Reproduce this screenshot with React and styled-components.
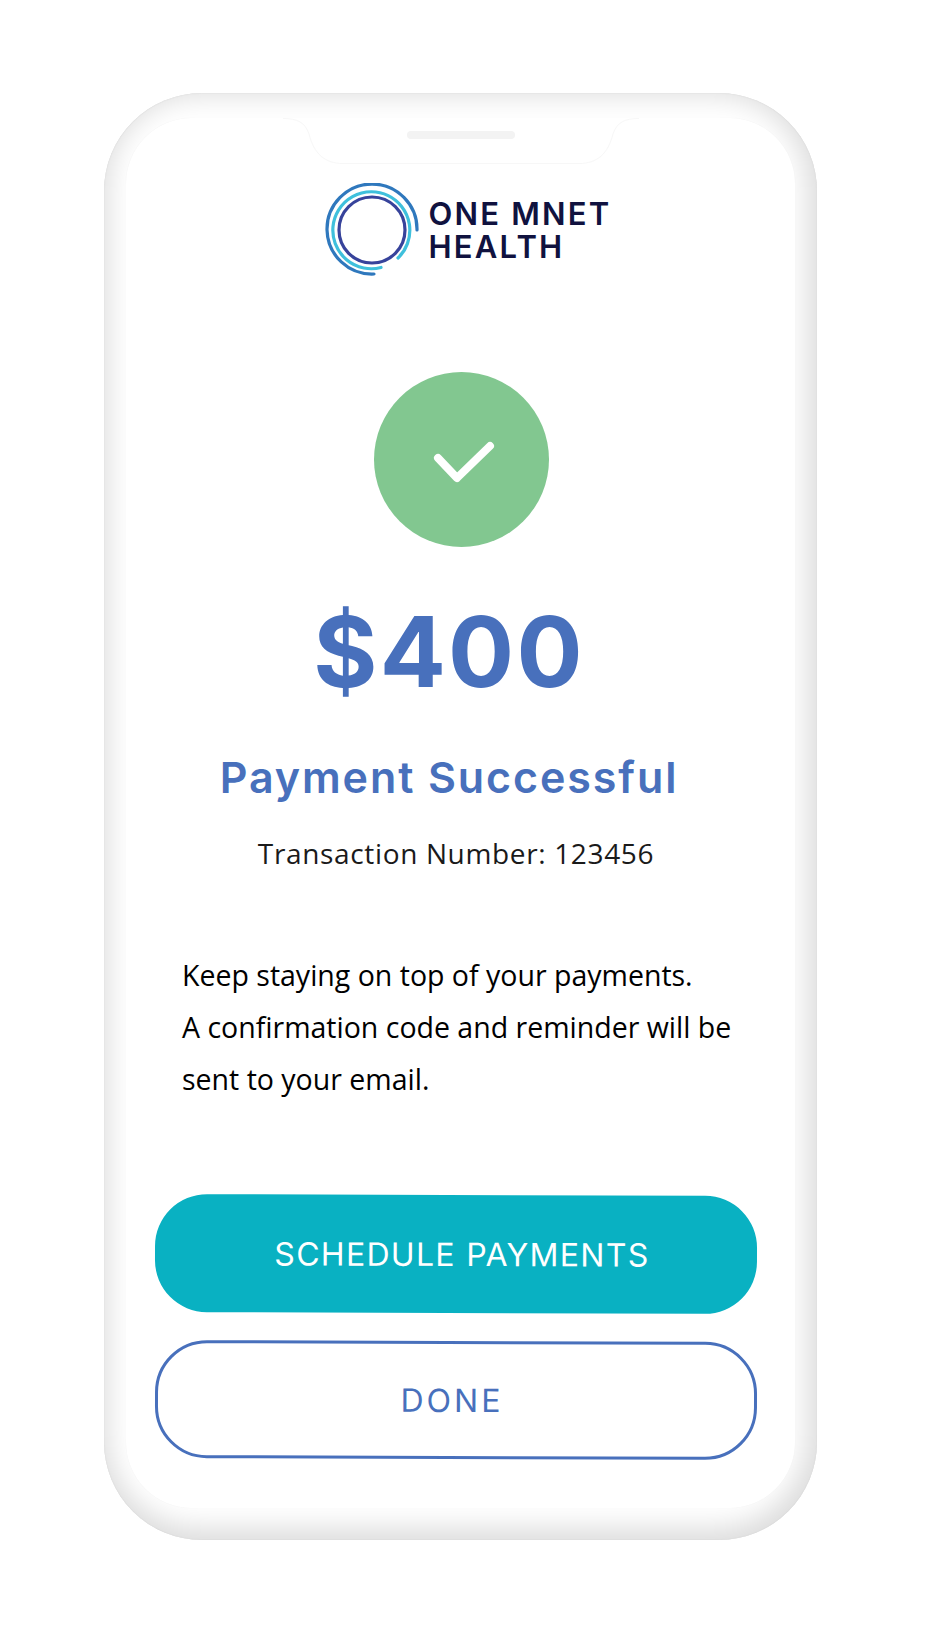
import React from 'react';
import styled, { createGlobalStyle } from 'styled-components';

const Global = createGlobalStyle`
  html, body { margin: 0; padding: 0; background: #fff; }
  body { font-family: "Open Sans", "Liberation Sans", sans-serif; }
`;

const Page = styled.div`
  width: 930px;
  height: 1650px;
  padding: 93px 0 0 104px;
  box-sizing: border-box;
`;

const Bezel = styled.div`
  width: 713px;
  height: 1447px;
  box-sizing: border-box;
  padding: 25px 22px 32px;
  border-radius: 98px;
  background: #fff;
  box-shadow: inset 0 0 1px #c4c4c4, inset -3px -5px 28px 7px #dcdcdc;
`;

const Screen = styled.div`
  height: 100%;
  border-radius: 66px;
  background: #fff;
  box-shadow: 0 0 1px #eee;
  display: flex;
  flex-direction: column;
  align-items: center;
`;

const NotchBox = styled.div`
  width: 356px;
  height: 46px;
  flex: none;
  position: relative;
  display: flex;
  justify-content: center;
`;

const Speaker = styled.div`
  position: absolute;
  top: 13px;
  left: 124px;
  width: 108px;
  height: 8px;
  border-radius: 4px;
  background: #f3f3f3;
`;

const Brand = styled.div`
  display: flex;
  align-items: center;
  gap: 10px;
  margin-top: 20px;
  height: 92px;
  margin-left: 15px;
`;

const BrandText = styled.div`
  font-family: Inter, "Liberation Sans", sans-serif;
  font-weight: 600;
  font-size: 31px;
  line-height: 33px;
  letter-spacing: 2.2px;
  color: #10123f;
`;

const Badge = styled.div`
  width: 175px;
  height: 175px;
  box-sizing: border-box;
  padding: 5px 0 0 5px;
  margin-top: 96px;
  margin-left: 2px;
  border-radius: 50%;
  background: #82c790;
  display: flex;
  align-items: center;
  justify-content: center;
`;

const Amount = styled.div`
  margin-top: 45px;
  padding-right: 23px;
  font-family: Inter, "Liberation Sans", sans-serif;
  font-weight: 700;
  font-size: 98px;
  line-height: 120px;
  letter-spacing: 2.2px;
  color: #4870bc;
`;

const Title = styled.div`
  margin-top: 40px;
  padding-right: 23px;
  font-family: Inter, "Liberation Sans", sans-serif;
  font-weight: 600;
  font-size: 43px;
  line-height: 50px;
  letter-spacing: 1.9px;
  color: #4870bc;
`;

const TxNumber = styled.div`
  margin-top: 33px;
  padding-right: 9px;
  font-size: 28px;
  line-height: 36px;
  letter-spacing: 0.65px;
  color: #1a1a1a;
`;

const Message = styled.p`
  align-self: flex-start;
  margin: 78px 0 0 56px;
  font-size: 28.5px;
  line-height: 52px;
  color: #000;
`;

const Button = styled.div`
  width: 602px;
  height: 118px;
  box-sizing: border-box;
  flex: none;
  margin-left: -9px;
  margin-top: ${p => p.$top}px;
  border-radius: 52px;
  display: flex;
  align-items: center;
  justify-content: center;
  padding: 0 ${p => p.$shiftLeft || 0}px 0 ${p => p.$shiftRight || 0}px;
  font-family: Inter, "Liberation Sans", sans-serif;
  font-size: 32px;
  font-weight: 400;
  letter-spacing: ${p => p.$track}px;
  color: ${p => (p.$outline ? '#4870bc' : '#fff')};
  background: ${p => (p.$outline ? '#fff' : '#09b1c2')};
  border: ${p => (p.$outline ? '3px solid #4870bc' : 'none')};
  transform: rotate(0.19deg);
`;

function Logo() {
  return (
    <svg width="94" height="94" viewBox="0 0 94 94" fill="none" strokeLinecap="round" strokeWidth="3.2">
      <path d="M92 47 A45 45 0 1 0 49 91" stroke="#2f78bd" />
      <path d="M73 75 A38.5 38.5 0 1 0 56 84.5" stroke="#3fc0dc" />
      <circle cx="47" cy="47" r="33" stroke="#37439b" />
    </svg>
  );
}

function Notch() {
  return (
    <NotchBox>
      <svg width="356" height="46" viewBox="0 0 356 46" fill="none" stroke="#f7f7f7">
        <path d="M0 .5 C14 .5 22 4 26 16 C31 36 42 45.5 60 45.5 H296 C314 45.5 325 36 330 16 C334 4 342 .5 356 .5" />
      </svg>
      <Speaker />
    </NotchBox>
  );
}

export default function App() {
  return (
    <Page>
      <Global />
      <Bezel>
        <Screen>
          <Notch />
          <Brand>
            <Logo />
            <BrandText>ONE MNET<br />HEALTH</BrandText>
          </Brand>
          <Badge>
            <svg width="64" height="44" viewBox="0 0 64 44" fill="none" stroke="#fff" strokeWidth="8" strokeLinecap="round" strokeLinejoin="round">
              <path d="M6 18 L25 38 L58 6" />
            </svg>
          </Badge>
          <Amount>$400</Amount>
          <Title>Payment Successful</Title>
          <TxNumber>Transaction Number: 123456</TxNumber>
          <Message>
            Keep staying on top of your payments.<br />
            A confirmation code and reminder will be<br />
            sent to your email.
          </Message>
          <Button $top={90} $shiftRight={12} $track={1.3}>SCHEDULE PAYMENTS</Button>
          <Button $top={28} $outline $shiftLeft={8} $track={3}>DONE</Button>
        </Screen>
      </Bezel>
    </Page>
  );
}
